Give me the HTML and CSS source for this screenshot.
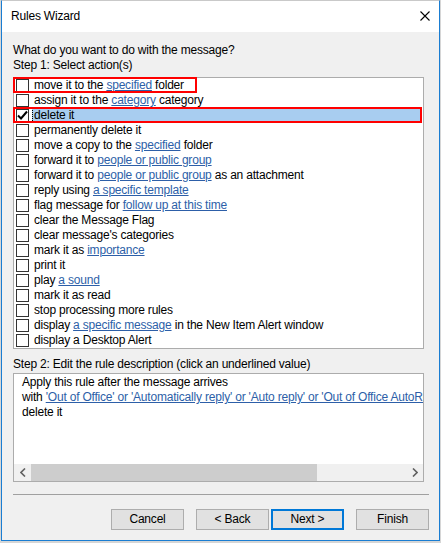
FILE: index.html
```html
<!DOCTYPE html>
<html lang="en">
<head>
<meta charset="utf-8">
<title>Rules Wizard</title>
<link rel="stylesheet" href="styles.css">
</head>
<body>
<div class="window">
  <div class="titlebar">
    <span class="title">Rules Wizard</span>
    <svg class="close" width="10" height="10" viewBox="0 0 10 10"><path d="M0.5 0.5 L9.5 9.5 M9.5 0.5 L0.5 9.5" stroke="#000" stroke-width="1.1" fill="none"/></svg>
  </div>
  <div class="content">
    <div class="line">What do you want to do with the message?</div>
    <div class="line">Step 1: Select action(s)</div>
    <div class="actions">
      <div class="row marked short"><span class="cb"></span><span class="txt">move it to the <a>specified</a> folder</span></div>
      <div class="row"><span class="cb"></span><span class="txt">assign it to the <a>category</a> category</span></div>
      <div class="row marked selected"><span class="cb checked"><svg width="11" height="11" viewBox="0 0 11 11"><path d="M1 5.5 L4 8.5 L10 1.5" stroke="#000" stroke-width="2" fill="none"/></svg></span><span class="txt">delete it</span></div>
      <div class="row"><span class="cb"></span><span class="txt">permanently delete it</span></div>
      <div class="row"><span class="cb"></span><span class="txt">move a copy to the <a>specified</a> folder</span></div>
      <div class="row"><span class="cb"></span><span class="txt">forward it to <a>people or public group</a></span></div>
      <div class="row"><span class="cb"></span><span class="txt">forward it to <a>people or public group</a> as an attachment</span></div>
      <div class="row"><span class="cb"></span><span class="txt">reply using <a>a specific template</a></span></div>
      <div class="row"><span class="cb"></span><span class="txt">flag message for <a>follow up at this time</a></span></div>
      <div class="row"><span class="cb"></span><span class="txt">clear the Message Flag</span></div>
      <div class="row"><span class="cb"></span><span class="txt">clear message's categories</span></div>
      <div class="row"><span class="cb"></span><span class="txt">mark it as <a>importance</a></span></div>
      <div class="row"><span class="cb"></span><span class="txt">print it</span></div>
      <div class="row"><span class="cb"></span><span class="txt">play <a>a sound</a></span></div>
      <div class="row"><span class="cb"></span><span class="txt">mark it as read</span></div>
      <div class="row"><span class="cb"></span><span class="txt">stop processing more rules</span></div>
      <div class="row"><span class="cb"></span><span class="txt">display <a>a specific message</a> in the New Item Alert window</span></div>
      <div class="row"><span class="cb"></span><span class="txt">display a Desktop Alert</span></div>
    </div>
    <div class="line step2">Step 2: Edit the rule description (click an underlined value)</div>
    <div class="desc">
      <div class="desc-text">
        <div class="line">Apply this rule after the message arrives</div>
        <div class="line">with <a>'Out of Office' or 'Automatically reply' or 'Auto reply' or 'Out of Office AutoReply'</a></div>
        <div class="line">delete it</div>
      </div>
      <div class="hscroll">
        <span class="arrow"><svg width="6" height="9" viewBox="0 0 6 9"><path d="M5 0.5 L1 4.5 L5 8.5" stroke="#606060" stroke-width="1.6" fill="none"/></svg></span>
        <div class="track"><div class="thumb"></div></div>
        <span class="arrow"><svg width="6" height="9" viewBox="0 0 6 9"><path d="M1 0.5 L5 4.5 L1 8.5" stroke="#606060" stroke-width="1.6" fill="none"/></svg></span>
      </div>
    </div>
    <div class="separator"></div>
    <div class="buttons">
      <button class="btn">Cancel</button>
      <button class="btn back">&lt; Back</button>
      <button class="btn default">Next &gt;</button>
      <button class="btn finish">Finish</button>
    </div>
  </div>
</div>
</body>
</html>
```

FILE: styles.css
```css
html, body {
  margin: 0;
  padding: 0;
}

body {
  background: #d6d6d6;
  width: 441px;
  height: 543px;
  overflow: hidden;
  font-family: "Liberation Sans", Arial, sans-serif;
  font-size: 12px;
  letter-spacing: -0.2px;
  color: #000;
}

.window {
  margin-left: 1px;
  width: 439px;
  height: 541px;
  box-sizing: border-box;
  border: 1px solid #1a7dd2;
  border-top-color: #c9c9c9;
  background: #f0f0f0;
  display: flex;
  flex-direction: column;
}

.titlebar {
  height: 31px;
  background: #fff;
  display: flex;
  align-items: flex-start;
  padding: 8px 9px 0 9px;
  box-sizing: border-box;
}

.title {
  line-height: 15px;
  flex: 1;
}

.close {
  margin-top: 2px;
}

.content {
  padding: 11px 10px 0 11px;
  display: flex;
  flex-direction: column;
}

.line {
  line-height: 15px;
  white-space: nowrap;
}

a {
  color: #2d5fa8;
  text-decoration: underline;
  text-underline-offset: 1px;
}

.actions {
  margin-top: 4px;
  width: 411px;
  height: 272px;
  box-sizing: border-box;
  border: 1px solid #acacac;
  background: #fff;
}

.row {
  position: relative;
  height: 15px;
  display: flex;
  align-items: flex-start;
}

.cb {
  width: 13px;
  height: 13px;
  box-sizing: border-box;
  border: 1px solid #333;
  background: #fff;
  margin: 1px 2px 0 2px;
  display: flex;
  align-items: center;
  justify-content: center;
  flex: none;
}

.txt {
  line-height: 13px;
  padding: 1px 0 1px 1px;
  margin-left: 1px;
  white-space: nowrap;
  border-left: 1px solid transparent;
  border-right: 1px solid transparent;
}

.selected .txt {
  flex: 1;
  background: #a8cdf0;
  border-left: 1px dotted #000;
  border-right: 1px dotted #000;
  margin-right: 1px;
}

/* red annotation frames drawn over list rows */
.marked::after {
  content: "";
  position: absolute;
  left: -1px;
  top: -1px;
  width: 409px;
  height: 16px;
  box-sizing: border-box;
  border: 2px solid #f00;
}

.marked.short::after {
  width: 184px;
}

.step2 {
  margin-top: 8px;
}

.desc {
  margin-top: 1px;
  width: 411px;
  height: 109px;
  box-sizing: border-box;
  border: 1px solid #acacac;
  background: #fff;
  display: flex;
  flex-direction: column;
  overflow: hidden;
}

.desc-text {
  flex: 1;
  padding: 1px 0 0 8px;
  overflow: hidden;
}

.hscroll {
  height: 17px;
  display: flex;
  background: #f0f0f0;
}

.arrow {
  width: 17px;
  display: flex;
  align-items: center;
  justify-content: center;
  flex: none;
}

.track {
  flex: 1;
  display: flex;
}

.thumb {
  width: 286px;
  background: #cdcdcd;
}

.separator {
  margin-top: 12px;
  height: 1px;
  background: #a0a0a0;
  width: 416px;
}

.buttons {
  margin-top: 14px;
  display: flex;
  justify-content: flex-end;
  width: 416px;
}

.btn {
  width: 73px;
  height: 21px;
  box-sizing: border-box;
  border: 1px solid #adadad;
  background: #e1e1e1;
  font-family: "Liberation Sans", Arial, sans-serif;
  font-size: 12px;
  letter-spacing: -0.2px;
  color: #000;
  padding: 0;
  margin: 0 0 0 12px;
  line-height: 17px;
}

.btn.default {
  margin-left: 2px;
  border: 2px solid #0078d7;
}
```
